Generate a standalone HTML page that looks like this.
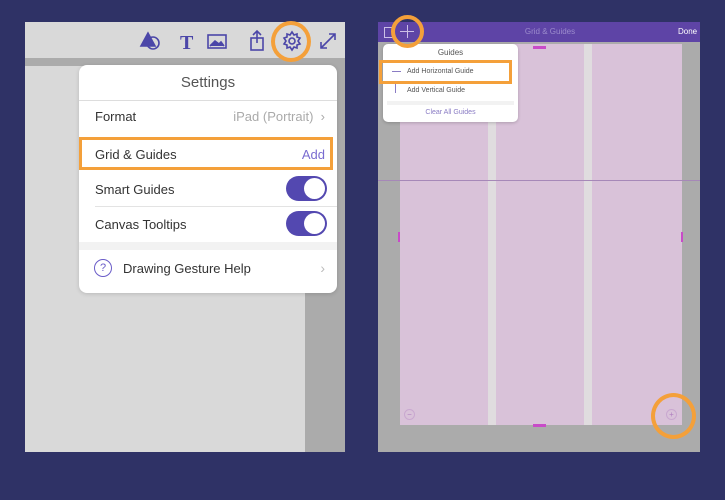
<!DOCTYPE html>
<html><head><style>
body{margin:0;width:725px;height:500px;background:#2f3266;position:relative;overflow:hidden;font-family:"Liberation Sans",sans-serif}
.a{position:absolute}
</style></head><body>
<!-- left panel -->
<div class="a" style="left:25px;top:22px;width:320px;height:430px;background:#d9d9d9"></div>
<div class="a" style="left:25px;top:58px;width:320px;height:8px;background:#ababab"></div>
<div class="a" style="left:305px;top:58px;width:40px;height:394px;background:#ababab"></div>
<!-- toolbar icons -->
<svg class="a" style="left:135px;top:26px" width="210" height="30" viewBox="0 0 210 30">
 <g fill="none" stroke="#4b46a8" stroke-width="1.6">
  <polygon points="13,7 6,20 20,20" fill="#4b46a8"/>
  <circle cx="18" cy="17" r="6"/>
  <rect x="73" y="9" width="18" height="13"/>
  <polyline points="75,20 80,15 84,18 86,16 89,20" fill="#4b46a8"/>
  <rect x="116" y="12" width="12" height="12"/>
  <line x1="122" y1="5" x2="122" y2="17"/><polyline points="118,9 122,5 126,9"/>
  <circle cx="157" cy="15" r="3"/>
  <path d="M157 6 l2 3 3-1 0 3 3 1-2 3 2 3-3 1 0 3-3-1-2 3-2-3-3 1 0-3-3-1 2-3-2-3 3-1 0-3 3 1z"/>
  <line x1="186" y1="22" x2="200" y2="8"/><polyline points="194,8 200,8 200,14"/><polyline points="186,16 186,22 192,22"/>
 </g>
 <text x="45" y="23" font-family="Liberation Serif" font-size="20" font-weight="bold" fill="#4b46a8">T</text>
</svg>
<div class="a" style="left:271px;top:21px;width:40px;height:41px;border:4px solid #f4a03a;border-radius:50%;box-sizing:border-box"></div>
<!-- settings popover -->
<div class="a" style="left:79px;top:65px;width:258px;height:228px;background:#fff;border-radius:8px;overflow:hidden;box-shadow:0 1px 4px rgba(0,0,0,.15)">
 <div class="a" style="left:0;top:0;width:258px;height:35px;text-align:center;line-height:35px;font-size:15px;color:#555">Settings</div>
 <div class="a" style="left:0;top:35px;width:258px;height:1px;background:#ddd"></div>
 <div class="a" style="left:16px;top:44px;font-size:13px;color:#333">Format</div>
 <div class="a" style="right:12px;top:44px;font-size:13px;color:#aaa">iPad (Portrait) &nbsp;›</div>
 <div class="a" style="left:16px;top:82px;font-size:13px;color:#333">Grid &amp; Guides</div>
 <div class="a" style="right:12px;top:82px;font-size:13px;color:#7a6cd0">Add</div>
 <div class="a" style="left:16px;top:117px;font-size:13px;color:#333">Smart Guides</div>
 <div class="a" style="left:16px;top:152px;font-size:13px;color:#333">Canvas Tooltips</div>
 <div class="a" style="left:16px;top:141px;width:242px;height:1px;background:#e3e3e3"></div>
 <div class="a" style="left:207px;top:111px;width:41px;height:25px;background:#5348b0;border-radius:13px"><div class="a" style="right:2px;top:2px;width:21px;height:21px;background:#fff;border-radius:50%"></div></div>
 <div class="a" style="left:207px;top:146px;width:41px;height:25px;background:#5348b0;border-radius:13px"><div class="a" style="right:2px;top:2px;width:21px;height:21px;background:#fff;border-radius:50%"></div></div>
 <div class="a" style="left:0;top:177px;width:258px;height:8px;background:#f2f2f2"></div>
 <div class="a" style="left:15px;top:194px;width:16px;height:16px;border:1.5px solid #6a5cc8;border-radius:50%;color:#6a5cc8;font-size:11px;text-align:center;line-height:16px">?</div>
 <div class="a" style="left:44px;top:196px;font-size:13px;color:#333">Drawing Gesture Help</div>
 <div class="a" style="right:12px;top:195px;font-size:14px;color:#bbb">›</div>
</div>
<div class="a" style="left:79px;top:137px;width:254px;height:33px;border:3px solid #f4a03a;box-sizing:border-box"></div>
<!-- right panel -->
<div class="a" style="left:378px;top:22px;width:322px;height:430px;background:#ababab"></div>
<div class="a" style="left:378px;top:22px;width:322px;height:20px;background:#5e44a6"></div>
<div class="a" style="left:520px;top:22px;width:60px;height:20px;color:#9b8bcc;font-size:8px;line-height:20px;text-align:center">Grid &amp; Guides</div>
<div class="a" style="left:678px;top:22px;color:#fff;font-size:8px;line-height:20px">Done</div>
<div class="a" style="left:384px;top:27px;width:8px;height:9px;border:1px solid #cbbfe6"></div>
<div class="a" style="left:400px;top:44px;width:282px;height:381px;background:#d9c2d9"></div>
<div class="a" style="left:488px;top:44px;width:8px;height:381px;background:#e0dcdf"></div>
<div class="a" style="left:584px;top:44px;width:8px;height:381px;background:#e0dcdf"></div>
<div class="a" style="left:378px;top:180px;width:322px;height:1px;background:#a688b8"></div>
<div class="a" style="left:533px;top:46px;width:13px;height:3px;background:#c84bc8"></div>
<div class="a" style="left:533px;top:424px;width:13px;height:3px;background:#c84bc8"></div>
<div class="a" style="left:398px;top:232px;width:2px;height:10px;background:#c84bc8"></div>
<div class="a" style="left:681px;top:232px;width:2px;height:10px;background:#c84bc8"></div>
<div class="a" style="left:404px;top:409px;width:9px;height:9px;border:1px solid #c9a8d0;border-radius:50%;color:#b07fc0;font-size:8px;line-height:9px;text-align:center">−</div>
<div class="a" style="left:666px;top:409px;width:9px;height:9px;border:1px solid #c9a8d0;border-radius:50%;color:#b07fc0;font-size:8px;line-height:9px;text-align:center">+</div>
<!-- guides popup -->
<div class="a" style="left:383px;top:44px;width:135px;height:78px;background:#fff;border-radius:5px;box-shadow:0 1px 3px rgba(0,0,0,.2);font-size:7px;color:#555">
 <div class="a" style="left:0;top:4px;width:135px;text-align:center;font-size:8px">Guides</div>
 <div class="a" style="left:24px;top:24px">Add Horizontal Guide</div>
 <div class="a" style="left:24px;top:43px">Add Vertical Guide</div>
 <div class="a" style="left:4px;top:57px;width:127px;height:4px;background:#f2f2f2"></div>
 <div class="a" style="left:0;top:65px;width:135px;text-align:center;color:#8a7cc4">Clear All Guides</div>
 <div class="a" style="left:9px;top:27px;width:9px;height:1px;background:#8a7cc4"></div>
 <div class="a" style="left:12px;top:40px;width:1px;height:9px;background:#8a7cc4"></div>
</div>
<div class="a" style="left:379px;top:60px;width:133px;height:24px;border:3px solid #f4a03a;box-sizing:border-box"></div>
<div class="a" style="left:391px;top:15px;width:33px;height:33px;border:4px solid #f4a03a;border-radius:50%;box-sizing:border-box"></div>
<div class="a" style="left:400px;top:31px;width:14px;height:1px;background:#cbbfe6"></div>
<div class="a" style="left:407px;top:25px;width:1px;height:13px;background:#cbbfe6"></div>
<div class="a" style="left:651px;top:393px;width:45px;height:46px;border:4px solid #f4a03a;border-radius:50%;box-sizing:border-box"></div>
</body></html>
